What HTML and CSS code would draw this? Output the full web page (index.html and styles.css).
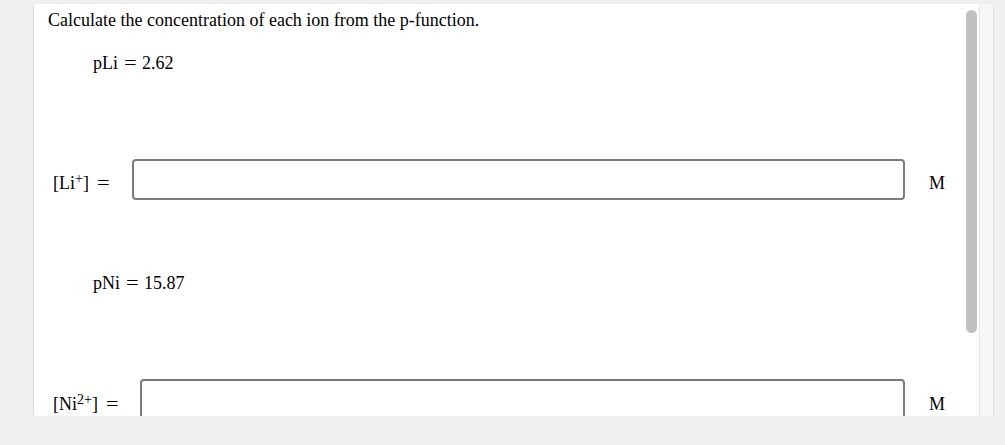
FILE: index.html
```html
<!DOCTYPE html>
<html lang="en">
<head>
    <meta charset="UTF-8">
    <title>p-function</title>
    <link rel="stylesheet" href="styles.css">
</head>
<body>

<div class="frame">
    <div class="question">
        <p class="prompt">Calculate the concentration of each ion from the p-function.</p>

        <!-- Lithium -->
        <p class="given">pLi<span class="eq">=</span>2.62</p>
        <div class="answer">
            <span class="label">[Li<sup>+</sup>]<span class="eq eq-label">=</span></span>
            <input type="text" class="field" aria-label="Li concentration">
            <span class="unit">M</span>
        </div>

        <!-- Nickel -->
        <p class="given given-next">pNi<span class="eq">=</span>15.87</p>
        <div class="answer answer-wide">
            <span class="label">[Ni<sup>2+</sup>]<span class="eq eq-label">=</span></span>
            <input type="text" class="field" aria-label="Ni concentration">
            <span class="unit">M</span>
        </div>
    </div>

    <div class="gutter"><div class="thumb"></div></div>
    <div class="track"></div>
</div>

</body>
</html>
```

FILE: styles.css
```css
body {
    margin: 0;
    background-color: #f0f0f0;
    font-family: "Liberation Serif", "Times New Roman", serif;
    color: #000;
}
.frame {
    display: flex;
    width: 959px;
    height: 412px;
    margin: 4px 0 0 34px;
    background-color: #fff;
    box-shadow: 0 1px 2px rgba(0, 0, 0, 0.25);
    overflow: hidden;
}
.question {
    flex: 1;
    padding: 0 0 0 14px;
    font-size: 18px;
    line-height: 20px;
}
.prompt {
    margin: 6px 0 0;
}
.given {
    margin: 23px 0 0 45px;
}
.given-next {
    margin-top: 73px;
}
/* math "=" is a touch wider than the text face */
.eq {
    display: inline-block;
    width: 12px;
    margin: 0 6px 0 6px;
    transform: scaleX(1.25);
    transform-origin: left center;
}
.eq-label {
    margin: 0 0 0 8px;
}
.answer {
    display: flex;
    align-items: center;
    margin-top: 86px;
    padding-left: 5px;
}
.label {
    width: 79px;
    padding-top: 7px;
}
.answer-wide .label {
    width: 87px;
    padding-top: 8px;
}
sup {
    font-size: 14px;
    line-height: 0;
    vertical-align: 6px;
}
.field {
    width: 769px;
    height: 37px;
    border: 2px solid #7b7b7b;
    border-radius: 4px;
    padding: 0;
    box-sizing: content-box;
}
.answer-wide .field {
    width: 761px;
}
.unit {
    margin-left: 24px;
    padding-top: 7px;
}
.answer-wide .unit {
    padding-top: 8px;
}
.gutter {
    width: 17px;
}
.thumb {
    width: 11px;
    height: 323px;
    margin: 6px 0 0 4px;
    background-color: #c1c1c1;
    border-radius: 6px;
}
.track {
    width: 13px;
    background-color: #f7f7f7;
    border-left: 1px solid #e4e4e4;
}
```
